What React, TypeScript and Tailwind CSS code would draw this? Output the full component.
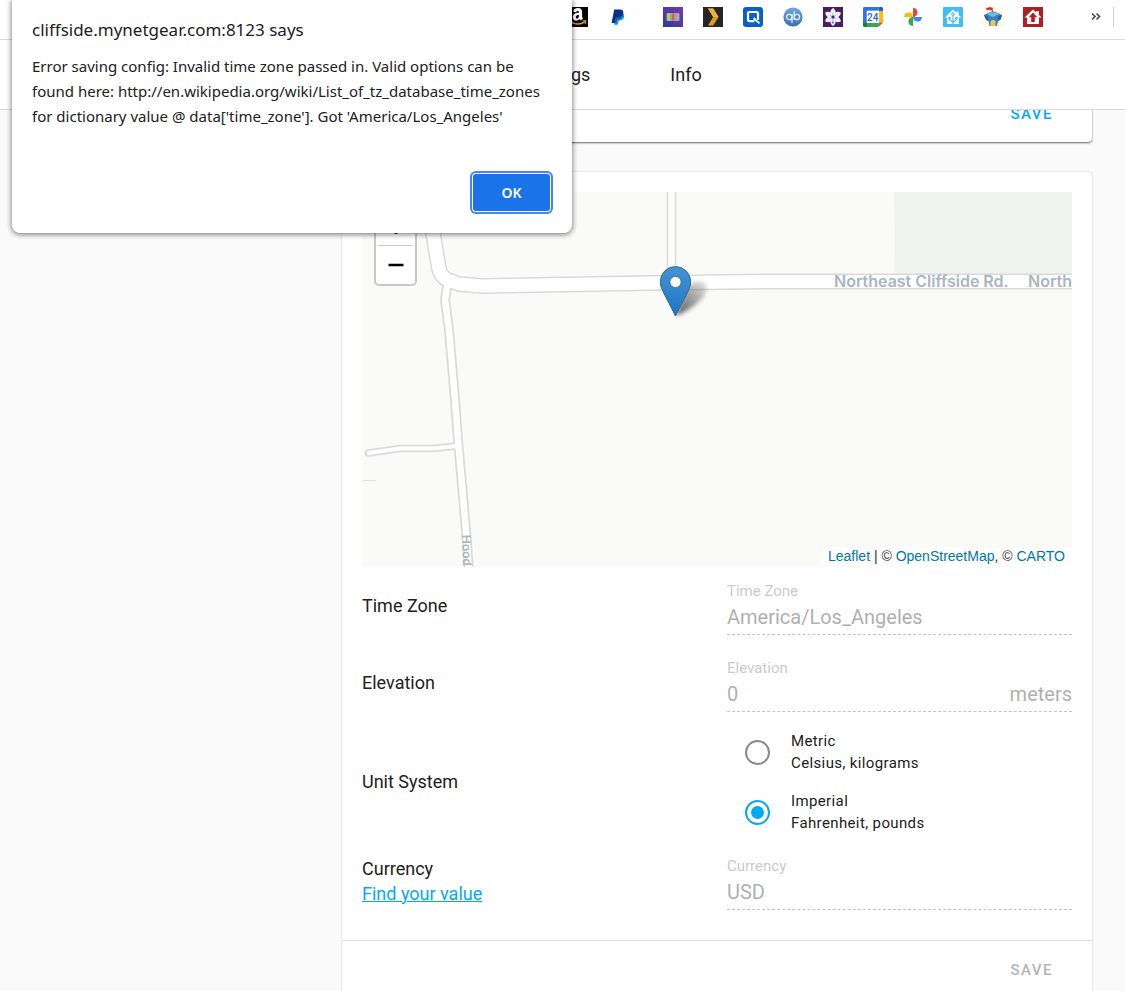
import React, { useState } from "react";

const box = { width: 20, height: 20, viewBox: "0 0 20 20", "aria-hidden": true } as const;

const AmazonIcon = () => (
  <svg {...box}>
    <rect width="20" height="20" fill="#050505" />
    <path d="M5.200 4.400C5.700 2 7.600 1 10 1c2.700 0 4.100 1.400 4.100 3.700v4.600c0 1.100.5 1.500 1 2.200L12.600 13.600c-.6-.5-1-1-1.300-1.500-2.200 2.500-6.500 1.900-6.500-1.900 0-3.400 2.900-4.500 6.100-4.500V5.200c0-1.800-2.400-1.700-2.700.2zM10.900 8.100c-1.800 0-3.100.4-3.100 2.100 0 2.300 3.100 1.700 3.100-.9z" fill="#fff" />
    <path d="M2 14c4.500 4 10.500 4 15 .7" fill="none" stroke="#e8952d" strokeWidth="1.500" />
    <path d="M14.500 14l3.500-.3-.8 3.200" fill="none" stroke="#e8952d" strokeWidth="1" />
  </svg>
);

const PaypalIcon = () => (
  <svg {...box}>
    <path d="M7.200 6h7.300c2 .8 2 3.200 1.300 4.900-.8 2-2.700 2.700-5 2.700l-.9 4.200H6z" fill="#1aa0e6" />
    <path d="M6.200 2.600h6c2.500 0 3.500 1.600 3 4-.6 3-2.600 4.100-5.200 4.100H7.800l-1 5.300H3.600z" fill="#0d2f81" />
    <path d="M7.900 10.700h2.300c2.400 0 4.200-1 4.900-3.500.3 3.200-2.500 5.300-5.700 5.300l-1 3.500H6.800z" fill="#135aa8" />
  </svg>
);

const TvIcon = () => (
  <svg {...box}>
    <defs>
      <linearGradient id="tvBack" x1="0" y1="1" x2="1" y2="0">
        <stop offset="0" stopColor="#273a9e" />
        <stop offset=".55" stopColor="#5a3aa6" />
        <stop offset="1" stopColor="#7c3aa6" />
      </linearGradient>
    </defs>
    <rect width="20" height="20" fill="url(#tvBack)" />
    <rect x="3.500" y="6" width="13" height="8" rx="1" fill="#a7a2b6" />
    <path d="M4.500 6.500H7v7H4.500z" fill="#d8c14a" />
    <path d="M7 6.500h2v7H7z" fill="#59c4a0" />
    <path d="M9 6.500h2v7H9z" fill="#e2516d" />
    <path d="M11 6.500h2v7h-2z" fill="#e78653" />
    <path d="M13 6.500h1.500v7H13z" fill="#73c5d4" />
  </svg>
);

const PlexIcon = () => (
  <svg {...box}>
    <rect width="20" height="20" fill="#262626" />
    <path d="M5 1.500h5.200L15.500 10l-5.300 8.500H5L10.200 10z" fill="#e09a1c" />
    <path d="M5 1.500h5.200L15.500 10h-5.300z" fill="#f0b33a" />
  </svg>
);

const QIcon = () => (
  <svg {...box}>
    <rect width="20" height="20" rx="3" fill="#0b5fcb" />
    <path d="M11.500 14.200H6.300c-.8 0-1.300-.5-1.300-1.300V6.300C5 5.500 5.500 5 6.300 5h7.400c.8 0 1.300.5 1.300 1.300V13" fill="none" stroke="#fff" strokeWidth="2.200" />
    <path d="M10.500 11l6 5.300" stroke="#fff" strokeWidth="1.800" />
  </svg>
);

const QbIcon = () => (
  <svg {...box}>
    <defs>
      <linearGradient id="qbBack" x1="0" y1="0" x2="0" y2="1">
        <stop offset="0" stopColor="#6fa6e0" />
        <stop offset="1" stopColor="#346fc0" />
      </linearGradient>
    </defs>
    <circle cx="10" cy="10" r="9.600" fill="url(#qbBack)" />
    <g fill="none" stroke="#e4f0fc" strokeWidth="1.300">
      <circle cx="6.300" cy="10" r="2.700" />
      <path d="M9 7v9M11.200 4v9" />
      <circle cx="13.900" cy="10" r="2.700" />
    </g>
  </svg>
);

const FlowerIcon = () => (
  <svg {...box}>
    <rect width="20" height="20" fill="#4b1c63" />
    <g fill="#f2f1f8">
      {[0, 60, 120, 180, 240, 300].map((a) => (
        <path key={a} d="M10 10C6 6.500 7 3 10 1c3 2 4 5.500 0 9z" transform={`rotate(${a} 10 10)`} />
      ))}
    </g>
    <path d="M10 6v8M6.500 8l7 4M13.500 8l-7 4" stroke="#8a859c" strokeWidth=".6" />
    <circle cx="10" cy="10" r="1.500" fill="#332b78" />
    <path d="M9 14.500h1.600v2H9z" fill="#6361d8" />
  </svg>
);

const CalendarIcon = () => (
  <svg {...box}>
    <path d="M1.500 0h14v4H4v12H0V1.500C0 .7.700 0 1.500 0z" fill="#2a76e8" />
    <path d="M15.500 0h3c.8 0 1.500.7 1.500 1.500V4h-4.500z" fill="#1b62c8" />
    <path d="M15.500 4H20v11.500h-4.500z" fill="#fbbc04" />
    <path d="M4 15.500h11.500V20H4z" fill="#34a853" />
    <path d="M0 15.500h4V20H1.500C.7 20 0 19.300 0 18.500z" fill="#188038" />
    <path d="M15.500 15.500H20L15.500 20z" fill="#ea4335" />
    <rect x="3.700" y="3.700" width="12.300" height="12.300" fill="#fff" />
    <text x="9.800" y="13.500" textAnchor="middle" fontFamily="Roboto, sans-serif" fontSize="10" fontWeight="500" fill="#1f67d2">24</text>
  </svg>
);

const PhotosIcon = () => (
  <svg {...box}>
    <path d="M10 1a4.500 4.500 0 0 1 0 9z" fill="#ea4335" />
    <path d="M19 10a4.500 4.500 0 0 1-9 0z" fill="#4285f4" />
    <path d="M10 19a4.500 4.500 0 0 1 0-9z" fill="#34a853" />
    <path d="M1 10a4.500 4.500 0 0 1 9 0z" fill="#fbbc04" />
  </svg>
);

const HomeAssistantIcon = () => (
  <svg {...box}>
    <rect width="20" height="20" rx="1" fill="#41bdf5" />
    <path d="M10 2.500l3.500 3.300V4.500h2v3.300l2.700 2.700h-2.400V17H4.200v-6.500H1.800z" fill="#fff" />
    <g stroke="#41bdf5" strokeWidth="1.100" fill="none">
      <path d="M10 8v9M10 15.500l-3.500-3v-1M10 15.500l3.500-3v-1" />
      <circle cx="10" cy="7" r="1.200" />
      <circle cx="6.500" cy="11" r=".8" />
      <circle cx="13.500" cy="11" r=".8" />
    </g>
  </svg>
);

const CastleIcon = () => (
  <svg {...box}>
    <rect width="20" height="20" fill="#fdfbe2" />
    <path d="M1 8l3-1.500L10 4l6 2.500L19 8l-1.500 4.500-2.500 1.500-1 5H6.500l-1-5-2.500-1.500z" fill="#3a82bf" />
    <path d="M4 7l6-2.500L16 7l-6 3z" fill="#79b8df" />
    <path d="M1 8l4 1.500.5 4.500-2.500-1.500zM19 8l-4 1.500-.5 4.700 3-1.700z" fill="#285f91" />
    <path d="M7.500 19v-4.500c.8-2 4.200-2 5 0V19z" fill="#efc25a" />
    <path d="M3 1l4.500-1L9.300 1v2.500L6.500 2.700 4 3.500z" fill="#d9302c" />
    <path d="M9.300.5v5" stroke="#8d4444" strokeWidth=".8" />
  </svg>
);

const RedHouseIcon = () => (
  <svg {...box}>
    <rect width="20" height="20" fill="#b11f24" />
    <path d="M10 2.500l3.300 3V4h2.500v3.800l2.700 2.700H16V17H4v-6.500H1.500z" fill="#fff" />
    <path d="M10 5.500l4.200 4.700h-2.400V15H8.200v-4.800H5.800z" fill="#b11f24" />
  </svg>
);

const bookmarks = [
  { name: "Amazon", Icon: AmazonIcon },
  { name: "PayPal", Icon: PaypalIcon, group: true },
  { name: "TV", Icon: TvIcon },
  { name: "Plex", Icon: PlexIcon },
  { name: "Quick", Icon: QIcon },
  { name: "QuickBooks", Icon: QbIcon },
  { name: "Flower", Icon: FlowerIcon },
  { name: "Calendar", Icon: CalendarIcon },
  { name: "Photos", Icon: PhotosIcon },
  { name: "Home Assistant", Icon: HomeAssistantIcon },
  { name: "Castle", Icon: CastleIcon },
  { name: "House", Icon: RedHouseIcon },
];

function BookmarksBar() {
  return (
    <div className="flex h-10 shrink-0 items-start border-b border-[#dcdcdc] bg-white pt-[7px] pr-[11px] pl-[568px]">
      <div className="flex gap-5">
        {bookmarks.map(({ name, Icon, group }) => (
          <a key={name} href="#" aria-label={name} className={group ? "mr-[15px] block" : "block"}>
            <Icon />
          </a>
        ))}
      </div>
      <button type="button" aria-label="More bookmarks" className="mr-3 ml-auto flex h-5 items-center">
        <svg width="10" height="10" viewBox="0 0 10 10" fill="none" stroke="#4a4d51" strokeWidth="1.700">
          <path d="M1 1.500L4 4.500 1 7.500M5.500 1.500l3 3-3 3" />
        </svg>
      </button>
      <span className="h-5 w-px bg-[#cfcfcf]" />
    </div>
  );
}

const mainRoad = "M64 -20L71 41L77 77Q79 85 86 88L97 92L120 94L288 91L400 89.500H720";
const hoodRoad = "M85 95L83 108L87 138L93 208L96 248L104 338L107 380";
const laneRoad = "M6.500 261L38 256.500H70L95 254";

function LocationMap() {
  return (
    <div className="relative h-[375px] overflow-hidden bg-[#fafaf8]">
      <svg className="block h-full w-full" viewBox="0 0 710 375" preserveAspectRatio="xMinYMin slice" role="img" aria-label="Map">
        <defs>
          <linearGradient id="pin" x1="0" y1="0" x2="0" y2="1">
            <stop offset="0" stopColor="#4594cf" />
            <stop offset="1" stopColor="#1b76c8" />
          </linearGradient>
          <linearGradient id="pinShadow" x1="0" y1="1" x2="1" y2="0">
            <stop offset="0" stopColor="#222" stopOpacity=".8" />
            <stop offset="1" stopColor="#777" stopOpacity=".25" />
          </linearGradient>
          <filter id="soft" x="-50%" y="-50%" width="200%" height="200%">
            <feGaussianBlur stdDeviation="2" />
          </filter>
        </defs>
        <path d="M532 0h178v82H533z" fill="#eef3ef" />
        <path d="M0 288.500h14" stroke="#e3e3e3" />
        <g fill="none" strokeLinecap="round" strokeLinejoin="round">
          <g stroke="#dadada">
            <path d={laneRoad} strokeWidth="7.500" />
            <path d="M309.500 -5v90" strokeWidth="9.500" />
            <path d={mainRoad} strokeWidth="16" />
            <path d={hoodRoad} strokeWidth="10" />
          </g>
          <g stroke="#fff">
            <path d={laneRoad} strokeWidth="4" />
            <path d="M309.500 -5v94" strokeWidth="6.500" />
            <path d={mainRoad} strokeWidth="13" />
            <path d={hoodRoad} strokeWidth="6.500" />
          </g>
        </g>
        <g fill="#aab5c2" fontFamily="Inter, sans-serif" fontWeight="600" fontSize="16">
          <text x="472" y="95">Northeast Cliffside Rd.</text>
          <text x="666" y="95">North</text>
          <text transform="translate(100 343) rotate(88)" fontSize="12">Hood</text>
        </g>
        <path d="M314 124l9-25q7-11 17-9q8 4 2 14q-9 12-28 20z" fill="url(#pinShadow)" filter="url(#soft)" />
        <path
          d="M313.500 124L301 99.500C299 95.500 298.300 93 298.300 89.800a15.200 15.200 0 0 1 30.400 0c0 3.200-.7 5.700-2.700 9.700z"
          fill="url(#pin)"
          stroke="#2e6c97"
          strokeWidth="1"
        />
        <circle cx="313.500" cy="90" r="5.600" fill="#fff" stroke="#2e6c97" strokeWidth=".8" />
      </svg>

      <div className="absolute top-3 left-3 flex w-[43px] flex-col overflow-hidden rounded-[5px] border-2 border-[#c8c8c7] bg-white px-0.5">
        <button type="button" aria-label="Zoom in" className="flex h-10 items-center justify-center border-b border-[#ccc]">
          <svg width="16" height="16" viewBox="0 0 16 16" stroke="#000" strokeWidth="2.500">
            <path d="M8 0v16M0 8h16" />
          </svg>
        </button>
        <button type="button" aria-label="Zoom out" className="flex h-[38px] items-center justify-center">
          <svg width="16" height="16" viewBox="0 0 16 16" stroke="#000" strokeWidth="2.500">
            <path d="M0.500 8h15" />
          </svg>
        </button>
      </div>

      <div className="absolute right-0 bottom-0 bg-white/70 px-[7px] pb-0.5 font-['Liberation_Sans',sans-serif] text-sm leading-[18px] text-[#333]">
        <a href="#" className="text-[#0078a8]">Leaflet</a> | © <a href="#" className="text-[#0078a8]">OpenStreetMap</a>, ©{" "}
        <a href="#" className="text-[#0078a8]">CARTO</a>
      </div>
    </div>
  );
}

function Field({ id, label, value, suffix }: { id: string; label: string; value: string; suffix?: string }) {
  return (
    <div className="pt-3.5 pb-[9px]">
      <label htmlFor={id} className="block text-[15px] leading-5 text-[#cbcbcb]">
        {label}
      </label>
      <div className="flex h-[34px] items-center border-b border-dashed border-[#c4c4c4] pb-0.5 text-xl text-[#b0b0b0]">
        <input id={id} disabled defaultValue={value} className="h-full min-w-0 flex-1 bg-transparent" />
        {suffix && <span>{suffix}</span>}
      </div>
    </div>
  );
}

function Row({ title, children }: { title: React.ReactNode; children: React.ReactNode }) {
  return (
    <div className="grid grid-cols-2 items-center gap-5">
      <div className="text-lg leading-[25px]">{title}</div>
      {children}
    </div>
  );
}

const units = [
  { id: "metric", name: "Metric", detail: "Celsius, kilograms" },
  { id: "imperial", name: "Imperial", detail: "Fahrenheit, pounds" },
];

function CardFooter({ muted }: { muted?: boolean }) {
  return (
    <div className="flex h-[58px] items-center justify-end border-t border-[#e0e0e0] pr-[29px]">
      <button
        type="button"
        disabled={muted}
        className={
          muted
            ? "px-2.5 py-2 text-[15px] leading-5 font-medium tracking-widest text-[#b5b5b5]"
            : "px-2.5 py-2 text-[15px] leading-5 font-medium tracking-widest text-[#03a9f4]"
        }
      >
        SAVE
      </button>
    </div>
  );
}

function Alert({ onClose }: { onClose: () => void }) {
  return (
    <div
      role="alertdialog"
      aria-labelledby="alert-title"
      aria-describedby="alert-text"
      className="absolute top-0 left-3 flex w-[560px] flex-col rounded-b-lg bg-white px-5 pt-[18px] pb-[22px] font-['Noto_Sans',sans-serif] text-[#202124] shadow-[0_1px_5px_1px_rgba(0,0,0,0.45)]"
    >
      <h1 id="alert-title" className="text-[17px] leading-6">cliffside.mynetgear.com:8123 says</h1>
      <p id="alert-text" className="mt-3 text-[15px] leading-[25px] whitespace-nowrap">
        Error saving config: Invalid time zone passed in. Valid options can be
        <br />
        found here: http://en.wikipedia.org/wiki/List_of_tz_database_time_zones
        <br />
        for dictionary value @ data['time_zone']. Got 'America/Los_Angeles'
      </p>
      <button
        type="button"
        onClick={onClose}
        className="mt-[45px] mr-0.5 h-[37px] w-[77px] self-end rounded-[3px] bg-[#1a73e8] text-sm font-semibold text-white shadow-[0_0_0_1px_#fff,0_0_0_3px_#4285f4]"
      >
        OK
      </button>
    </div>
  );
}

export default function App() {
  const [unit, setUnit] = useState("imperial");
  const [open, setOpen] = useState(true);

  return (
    <div className="relative flex h-screen flex-col overflow-hidden bg-[#fafafa] font-[Roboto,sans-serif] text-[#212121]">
      <BookmarksBar />
      <nav className="flex h-[70px] shrink-0 items-center border-b border-[#dcdcdc] bg-white pl-[511px] text-lg">
        <a href="#" className="px-10">Logs</a>
        <a href="#" className="px-10">Info</a>
      </nav>

      <main className="flex-1 overflow-hidden pr-[33px] pl-[342px]">
        <section className="-mt-[26px] rounded bg-white shadow-[0_1px_2px_rgba(0,0,0,0.6)]">
          <CardFooter />
        </section>

        <section className="mt-[30px] rounded bg-white shadow-[0_0_2px_rgba(0,0,0,0.25)]">
          <div className="px-5 pt-5 pb-[21px]">
            <LocationMap />
            <Row title="Time Zone">
              <Field id="time-zone" label="Time Zone" value="America/Los_Angeles" />
            </Row>
            <Row title="Elevation">
              <Field id="elevation" label="Elevation" value="0" suffix="meters" />
            </Row>
            <Row title="Unit System">
              <div className="pt-px">
                {units.map((u) => (
                  <label key={u.id} className="flex h-[60px] items-center gap-[21px] pl-[18px] text-[15px] leading-[22px] tracking-wide">
                    <input
                      type="radio"
                      name="unit"
                      checked={unit === u.id}
                      onChange={() => setUnit(u.id)}
                      className="grid size-[25px] appearance-none place-items-center rounded-full border-2 border-[#888] before:size-[13px] before:rounded-full checked:border-[#03a9f4] checked:before:bg-[#03a9f4]"
                    />
                    <span>
                      {u.name}
                      <br />
                      {u.detail}
                    </span>
                  </label>
                ))}
              </div>
            </Row>
            <Row
              title={
                <>
                  Currency
                  <br />
                  <a href="#" className="text-[#03a9f4] underline">Find your value</a>
                </>
              }
            >
              <Field id="currency" label="Currency" value="USD" />
            </Row>
          </div>
          <CardFooter muted />
        </section>
      </main>

      {open && <Alert onClose={() => setOpen(false)} />}
    </div>
  );
}
